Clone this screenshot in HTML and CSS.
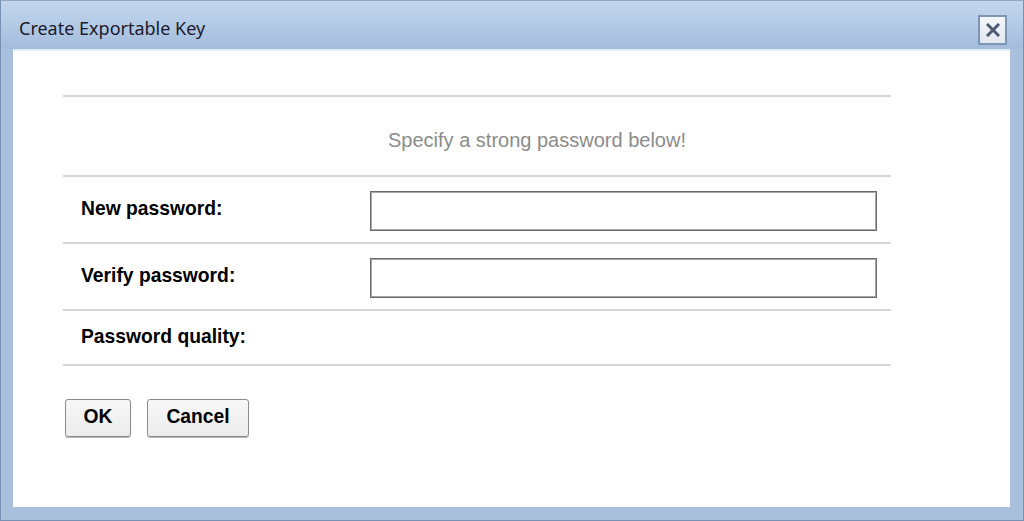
FILE: index.html
```html
<!DOCTYPE html>
<html>
<head>
<meta charset="utf-8">
<title>Create Exportable Key</title>
<link rel="stylesheet" href="styles.css">
</head>
<body>
<div class="window">
  <div class="titlebar">
    <span class="title">Create Exportable Key</span>
    <button class="close" aria-label="Close">
      <svg width="14" height="14" viewBox="0 0 14 14"><path d="M2 2 L12 12 M12 2 L2 12" stroke="#4b5b72" stroke-width="3" stroke-linecap="square"/></svg>
    </button>
  </div>
  <div class="content">
    <div class="form">
      <div class="hint">Specify a strong password below!</div>
      <div class="row">
        <label class="label">New password:</label>
        <input class="field" type="password">
      </div>
      <div class="row">
        <label class="label">Verify password:</label>
        <input class="field" type="password">
      </div>
      <div class="row quality">
        <span class="label">Password quality:</span>
      </div>
      <div class="buttons">
        <button class="btn btn-ok">OK</button>
        <button class="btn btn-cancel">Cancel</button>
      </div>
    </div>
  </div>
</div>
</body>
</html>
```

FILE: styles.css
```css
html, body {
  margin: 0;
  padding: 0;
  width: 1024px;
  height: 521px;
  overflow: hidden;
}
.window {
  box-sizing: border-box;
  width: 1024px;
  height: 521px;
  background: #a9c0dd;
  border: 1px solid #7891b3;
  border-top-color: #8fa8c8;
  display: flex;
  flex-direction: column;
}
.titlebar {
  height: 48px;
  flex: none;
  display: flex;
  align-items: center;
  justify-content: space-between;
  padding: 0 16px 0 18px;
  background: linear-gradient(#c4d6ed, #b3cae6 50%, #a4bcdc);
}
.title {
  font-family: "Noto Sans", "Open Sans", sans-serif;
  font-size: 18px;
  color: #1a1a2a;
  padding-top: 6px;
}
.close {
  width: 29px;
  height: 30px;
  box-sizing: border-box;
  border: 2px solid #7d95b4;
  background: linear-gradient(#f4f6f9, #e2e8ef);
  padding: 0;
  display: flex;
  align-items: center;
  justify-content: center;
  margin-top: 10px;
}
.content {
  flex: 1;
  margin: 0 13px 13px 12px;
  background: #ffffff;
  border-top: 2px solid #e4eaf2;
}
.form {
  width: 828px;
  margin-left: 50px;
  margin-top: 44px;
  font-family: "Liberation Sans", Arial, sans-serif;
}
.hint {
  border-top: 2px solid #d6d6d6;
  border-bottom: 2px solid #d6d6d6;
  display: flex;
  align-items: center;
  justify-content: center;
  color: #8c8c8c;
  font-size: 20px;
  padding-top: 9px;
  padding-left: 120px;
  box-sizing: border-box;
  height: 82px;
}
.row {
  display: flex;
  align-items: center;
  height: 65px;
  border-bottom: 2px solid #d6d6d6;
  padding-left: 18px;
}
.row.quality {
  height: 53px;
}
.label {
  font-weight: bold;
  font-size: 19.3px;
  color: #000;
  width: 289px;
  flex: none;
  margin-top: -1px;
}
.field {
  box-sizing: border-box;
  width: 507px;
  height: 40px;
  border: 1px solid #6a6a6a;
  box-shadow: inset 0 0 0 1px #a8a8a8;
  background: #fff;
  margin: 3px 0 0 0;
  outline: none;
}
.buttons {
  display: flex;
  gap: 16px;
  margin-top: 33px;
  padding-left: 2px;
}
.btn {
  font-family: "Liberation Sans", Arial, sans-serif;
  font-weight: bold;
  font-size: 19.3px;
  height: 38px;
  box-sizing: border-box;
  border: 1px solid #8a8a8a;
  border-radius: 3px;
  background: linear-gradient(#f7f7f7, #ececec);
  box-shadow: 0 1px 0 #b9b9b9;
  color: #000;
  padding: 0 0 2px 0;
}
.btn-ok { width: 66px; }
.btn-cancel { width: 102px; }
```
